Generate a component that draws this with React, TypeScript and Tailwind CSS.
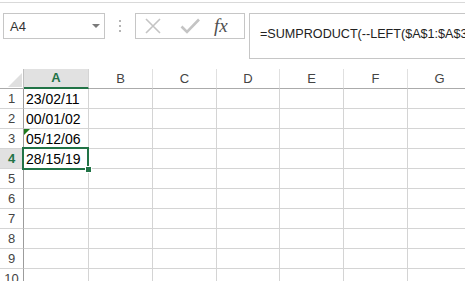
import React from "react";

const cols = [
  { l: "A", w: 65 },
  { l: "B", w: 64 },
  { l: "C", w: 64 },
  { l: "D", w: 63 },
  { l: "E", w: 64 },
  { l: "F", w: 64 },
  { l: "G", w: 64 },
];

const data: Record<number, string> = {
  1: "23/02/11",
  2: "00/01/02",
  3: "05/12/06",
  4: "28/15/19",
};

export default function App() {
  const rows = [1, 2, 3, 4, 5, 6, 7, 8, 9, 10];
  return (
    <div className="w-[465px] h-[281px] overflow-hidden bg-white font-['Liberation_Sans',Arial,sans-serif]">
      <div className="h-[2px]" />
      <div className="h-px bg-[#d9d9d9]" />
      <div className="flex items-start mt-[10px] h-[46px]">
        {/* Name box */}
        <div className="ml-[3px] w-[102px] h-[26px] shrink-0 border border-[#c6c6c6] flex items-center justify-between pl-[6px] pr-[4px]">
          <span className="text-[13px] text-[#333] leading-none">A4</span>
          <svg width="8" height="4" viewBox="0 0 8 4">
            <polygon points="0,0 8,0 4,4" fill="#7a7a7a" />
          </svg>
        </div>
        {/* dots */}
        <div className="w-[30px] h-[26px] shrink-0 flex flex-col items-center justify-center gap-[3px]">
          <div className="w-[2px] h-[2px] bg-[#b5b5b5]" />
          <div className="w-[2px] h-[2px] bg-[#b5b5b5]" />
          <div className="w-[2px] h-[2px] bg-[#b5b5b5]" />
        </div>
        {/* buttons box */}
        <div className="w-[110px] h-[26px] shrink-0 border border-[#c6c6c6] flex items-center">
          <svg width="16" height="16" viewBox="0 0 16 16" className="ml-[9px]">
            <path d="M1 1 L15 15 M15 1 L1 15" stroke="#c4c4c4" strokeWidth="1.6" fill="none" />
          </svg>
          <svg width="20" height="16" viewBox="0 0 20 16" className="ml-[19px]">
            <path d="M1.5 8.5 L7 14 L19 1.5" stroke="#c4c4c4" strokeWidth="2.6" fill="none" />
          </svg>
          <span className="ml-[14px] font-['Liberation_Serif',serif] italic text-[19px] leading-none text-[#505050] -mt-[2px]">
            fx
          </span>
        </div>
        {/* formula input */}
        <div className="ml-[4px] w-[240px] h-[46px] shrink-0 border border-[#c6c6c6] pl-[10px] pt-[7px] overflow-hidden">
          <span className="text-[12.6px] leading-[16px] text-[#222] whitespace-nowrap">
            =SUMPRODUCT(--LEFT($A$1:$A$3:$A$4,2)*1)
          </span>
        </div>
      </div>
      <div className="h-[10px]" />
      {/* grid */}
      <div className="flex flex-col">
        {/* header row */}
        <div className="flex h-[20px]">
          <div className="w-[24px] h-[20px] shrink-0 border-r border-b border-[#c0c0c0] border-b-[#ababab] flex items-end justify-end pr-[1px] pb-[1px]">
            <svg width="14" height="14" viewBox="0 0 14 14">
              <polygon points="14,0 14,14 0,14" fill="#dfdfdf" />
            </svg>
          </div>
          {cols.map((c) => (
            <div
              key={c.l}
              style={{ width: c.w }}
              className={
                c.l === "A"
                  ? "h-[20px] shrink-0 border-r border-[#d4d4d4] border-b-2 border-b-[#217346] bg-[#e1e1e1] flex items-center justify-center text-[13px] font-bold text-[#217346]"
                  : "h-[20px] shrink-0 border-r border-b border-r-[#e0e0e0] border-b-[#ababab] flex items-center justify-center text-[13px] text-[#444]"
              }
            >
              {c.l}
            </div>
          ))}
        </div>
        {rows.map((r) => (
          <div key={r} className="flex h-[20px]">
            <div
              className={
                r === 4
                  ? "w-[24px] h-[20px] shrink-0 border-r border-b border-r-[#9c9c9c] border-b-[#d4d4d4] bg-[#e1e1e1] flex items-center justify-center text-[13px] font-bold text-[#217346]"
                  : "w-[24px] h-[20px] shrink-0 border-r border-b border-r-[#9c9c9c] border-b-[#d4d4d4] flex items-center justify-center text-[13px] text-[#444]"
              }
            >
              {r}
            </div>
            {cols.map((c) => (
              <div
                key={c.l}
                style={{ width: c.w }}
                className="relative h-[20px] shrink-0 border-r border-b border-[#d4d4d4] pl-[2px] text-[14px] leading-[20px] text-black whitespace-nowrap"
              >
                {c.l === "A" ? data[r] : null}
                {c.l === "A" && r === 3 && (
                  <svg width="6" height="6" viewBox="0 0 6 6" className="absolute left-0 top-0">
                    <polygon points="0,0 6,0 0,6" fill="#1e7a1e" />
                  </svg>
                )}
                {c.l === "A" && r === 4 && (
                  <>
                    <div className="absolute z-10 top-[-2px] left-[-2px] right-[-1px] bottom-[-2px] border-2 border-[#217346]" />
                    <div className="absolute z-20 right-[-4px] bottom-[-5px] w-[7px] h-[7px] bg-[#217346] border border-white" />
                  </>
                )}
              </div>
            ))}
          </div>
        ))}
      </div>
    </div>
  );
}
